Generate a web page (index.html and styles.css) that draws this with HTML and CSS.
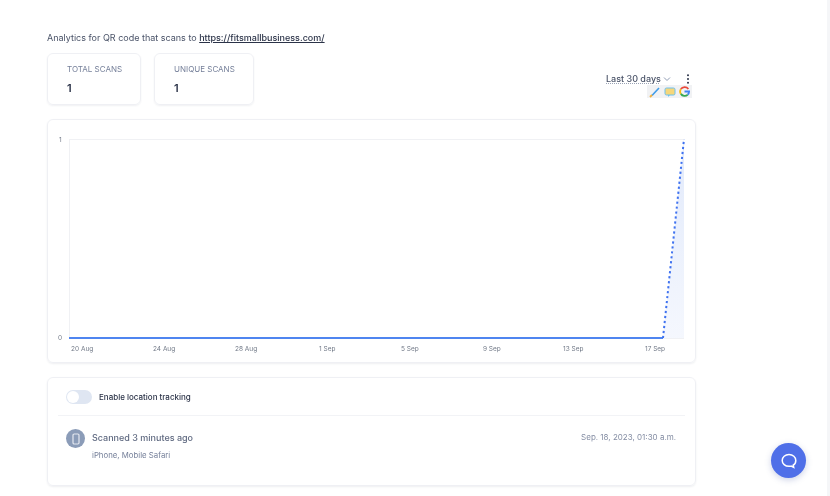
FILE: index.html
```html
<!DOCTYPE html>
<html lang="en">
<head>
<meta charset="utf-8">
<title>QR code analytics</title>
<link rel="stylesheet" href="styles.css">
</head>
<body>
<main class="page">
  <p class="intro">Analytics for QR code that scans to <a class="intro-link" href="#">https://fitsmallbusiness.com/</a></p>
  <div class="summary">
    <section class="stat stat-total">
      <h2 class="stat-label">TOTAL SCANS</h2>
      <div class="stat-value">1</div>
    </section>
    <section class="stat stat-unique">
      <h2 class="stat-label">UNIQUE SCANS</h2>
      <div class="stat-value">1</div>
    </section>
    <div class="range">
      <div class="range-row">
        <span class="range-label">Last 30 days</span>
        <svg class="chevron" width="8" height="6" viewBox="0 0 8 6"><path d="M1 1.500 4 4.500 7 1.500" fill="none" stroke="#8f9bb3" stroke-width="1"/></svg>
        <svg class="kebab" width="4" height="10" viewBox="0 0 4 10"><circle cx="2" cy="1.200" r="1" fill="#2b3348"/><circle cx="2" cy="5" r="1" fill="#2b3348"/><circle cx="2" cy="8.800" r="1" fill="#2b3348"/></svg>
      </div>
      <div class="ext-icons">
        <span class="ext-icon"><svg width="12" height="12" viewBox="0 0 12 12"><path d="M3 9.500 10 2" stroke="#3f9be8" stroke-width="1.600" fill="none"/><path d="M1 11 3 9" stroke="#f0b040" stroke-width="1.800" fill="none"/></svg></span>
        <span class="ext-icon"><svg width="12" height="12" viewBox="0 0 12 12"><rect x="1" y="2" width="10" height="7" rx="1.500" fill="#f6d77a" stroke="#6cc0ee" stroke-width="1"/><path d="M4 9v2l2-2" fill="#6cc0ee"/></svg></span>
        <span class="ext-icon"><svg width="11" height="11" viewBox="0 0 12 12"><path d="M10.200 3.200A5 5 0 0 0 2 3.400" fill="none" stroke="#e9493b" stroke-width="2"/><path d="M2 3.400a5 5 0 0 0 0 5.200" fill="none" stroke="#f5bb0f" stroke-width="2"/><path d="M2 8.600a5 5 0 0 0 7.600.8" fill="none" stroke="#34a853" stroke-width="2"/><path d="M6 6h5a5 5 0 0 1-1.400 3.400" fill="none" stroke="#4285f4" stroke-width="2"/></svg></span>
      </div>
    </div>
  </div>

  <section class="card chart-card">
    <svg class="chart" width="647" height="242" viewBox="48 120 647 242">
      <defs>
        <linearGradient id="area" x1="0" y1="0" x2="0" y2="1">
          <stop offset="0" stop-color="#dfe8fb" stop-opacity="0.9"/>
          <stop offset="1" stop-color="#f4f7fe" stop-opacity="0.9"/>
        </linearGradient>
      </defs>
      <path d="M69 139.500H684M69 338.500H684M69.500 139V338" stroke="#f0f1f4" fill="none"/>
      <path d="M663 338 684 139V338Z" fill="url(#area)"/>
      <path d="M69 338H663" stroke="#4f85f0" stroke-width="2" fill="none"/>
      <path d="M663 338 684 139" stroke="#3f72f0" stroke-width="2" stroke-dasharray="2.200 2.800" fill="none"/>
      <text class="axis" x="59" y="142">1</text>
      <text class="axis" x="58" y="340">0</text>
      <text class="axis" x="71" y="350.500">20 Aug</text>
      <text class="axis" x="153" y="350.500">24 Aug</text>
      <text class="axis" x="235" y="350.500">28 Aug</text>
      <text class="axis" x="319" y="350.500">1 Sep</text>
      <text class="axis" x="401" y="350.500">5 Sep</text>
      <text class="axis" x="483" y="350.500">9 Sep</text>
      <text class="axis" x="563" y="350.500">13 Sep</text>
      <text class="axis" x="645" y="350.500">17 Sep</text>
    </svg>
  </section>

  <section class="card location-card">
    <div class="tracking">
      <span class="toggle"><span class="knob"></span></span>
      <span class="tracking-label">Enable location tracking</span>
    </div>
    <div class="scan">
      <span class="device"><svg width="8" height="12" viewBox="0 0 8 12"><rect x="1" y="1" width="6" height="10" rx="1.200" fill="none" stroke="#e4e8f0" stroke-width="1.200"/></svg></span>
      <div class="scan-text">
        <div class="scan-title">Scanned 3 minutes ago</div>
        <div class="scan-device">iPhone, Mobile Safari</div>
      </div>
      <div class="scan-date">Sep. 18, 2023, 01:30 a.m.</div>
    </div>
  </section>
</main>
<button class="chat" aria-label="Chat"><svg width="18" height="18" viewBox="0 0 18 18"><path d="M9 2.500c3.900 0 6.800 2.600 6.800 5.900 0 2.200-1 3.800-2.600 4.800l.5 2.100-2.600-1.200c-.7.2-1.400.2-2.100.2-3.900 0-6.800-2.600-6.800-5.900S5.100 2.500 9 2.500Z" fill="none" stroke="#fff" stroke-width="1.500"/></svg></button>
</body>
</html>
```
FILE: styles.css
```css
html, body {
  margin: 0;
  height: 100%;
  overflow: hidden;
  background: #fff;
}
body {
  font-family: Inter, "Liberation Sans", sans-serif;
  color: #2b3348;
  border-right: 3px solid #f5f6f8;
  box-sizing: border-box;
  position: relative;
}
.page {
  width: 649px;
  margin-left: 47px;
  padding-top: 32px;
  filter: blur(0.5px);
}
.intro {
  margin: 0;
  font-size: 9px;
  line-height: 12px;
  color: #4a5368;
}
.intro-link {
  color: #2b3348;
  font-weight: 500;
}
.summary {
  display: flex;
  gap: 13px;
  margin-top: 9px;
  height: 52px;
}
.stat {
  box-sizing: border-box;
  height: 52px;
  border: 1px solid #eff0f4;
  border-radius: 6px;
  box-shadow: 0 1px 2px rgba(40, 50, 80, 0.07);
  padding: 10px 0 0 19px;
}
.stat-total { width: 94px; }
.stat-unique { width: 100px; }
.stat-label {
  margin: 0;
  font-size: 8px;
  line-height: 10px;
  font-weight: 400;
  color: #76809a;
}
.stat-value {
  margin-top: 8px;
  font-size: 11px;
  line-height: 13px;
  font-weight: 600;
  color: #2b3348;
}
.range {
  margin-left: auto;
  margin-top: 20px;
  width: 90px;
  display: flex;
  flex-direction: column;
  align-items: flex-end;
}
.range-row {
  display: flex;
  align-items: center;
  height: 12px;
  align-self: stretch;
}
.range-label {
  font-size: 9px;
  font-weight: 500;
  line-height: 12px;
  color: #4a5368;
  white-space: nowrap;
  text-decoration: underline dotted #9aa3b5;
}
.chevron { margin-left: 2px; }
.kebab { margin-left: auto; margin-right: 6px; }
.ext-icons {
  display: flex;
  margin-right: 4px;
  background: #f1f2f4;
}
.ext-icon {
  width: 15px;
  height: 13px;
  display: flex;
  align-items: center;
  justify-content: center;
}
.card {
  border: 1px solid #eff0f4;
  border-radius: 6px;
  box-shadow: 0 1px 2px rgba(40, 50, 80, 0.08);
  box-sizing: border-box;
}
.chart-card {
  height: 244px;
  margin-top: 14px;
}
.chart { display: block; }
.axis {
  font-family: Inter, "Liberation Sans", sans-serif;
  font-size: 6.500px;
  fill: #727a88;
}
.location-card {
  height: 109px;
  margin-top: 14px;
  padding: 0 10px;
}
.tracking {
  display: flex;
  align-items: center;
  gap: 7px;
  height: 37px;
  padding: 1px 0 0 8px;
  box-sizing: content-box;
  height: 36px;
  border-bottom: 1px solid #f2f3f6;
}
.toggle {
  width: 26px;
  height: 14px;
  border-radius: 7px;
  background: #dfe6f2;
  display: block;
  position: relative;
}
.knob {
  position: absolute;
  left: 1px;
  top: 1px;
  width: 12px;
  height: 12px;
  border-radius: 50%;
  background: #fff;
}
.tracking-label {
  font-size: 8px;
  font-weight: 500;
  color: #2b3348;
}
.scan {
  display: flex;
  align-items: flex-start;
  padding: 13px 9px 0 8px;
}
.device {
  width: 19px;
  height: 19px;
  border-radius: 50%;
  background: #8b9cb8;
  display: flex;
  align-items: center;
  justify-content: center;
}
.scan-text { margin-left: 7px; }
.scan-title {
  font-size: 9px;
  line-height: 12px;
  margin-top: 3px;
  font-weight: 500;
  color: #5f6980;
}
.scan-device {
  font-size: 7.800px;
  line-height: 10px;
  margin-top: 6px;
  color: #76809a;
}
.scan-date {
  margin-left: auto;
  margin-top: 3px;
  font-size: 8px;
  line-height: 10px;
  color: #848da3;
}
.chat {
  position: absolute;
  left: 771px;
  top: 443px;
  width: 35px;
  height: 35px;
  border: 0;
  padding: 0;
  border-radius: 50%;
  background: #4f6fe8;
  box-shadow: 0 2px 6px rgba(60, 80, 160, 0.25);
  display: flex;
  align-items: center;
  justify-content: center;
}
```
